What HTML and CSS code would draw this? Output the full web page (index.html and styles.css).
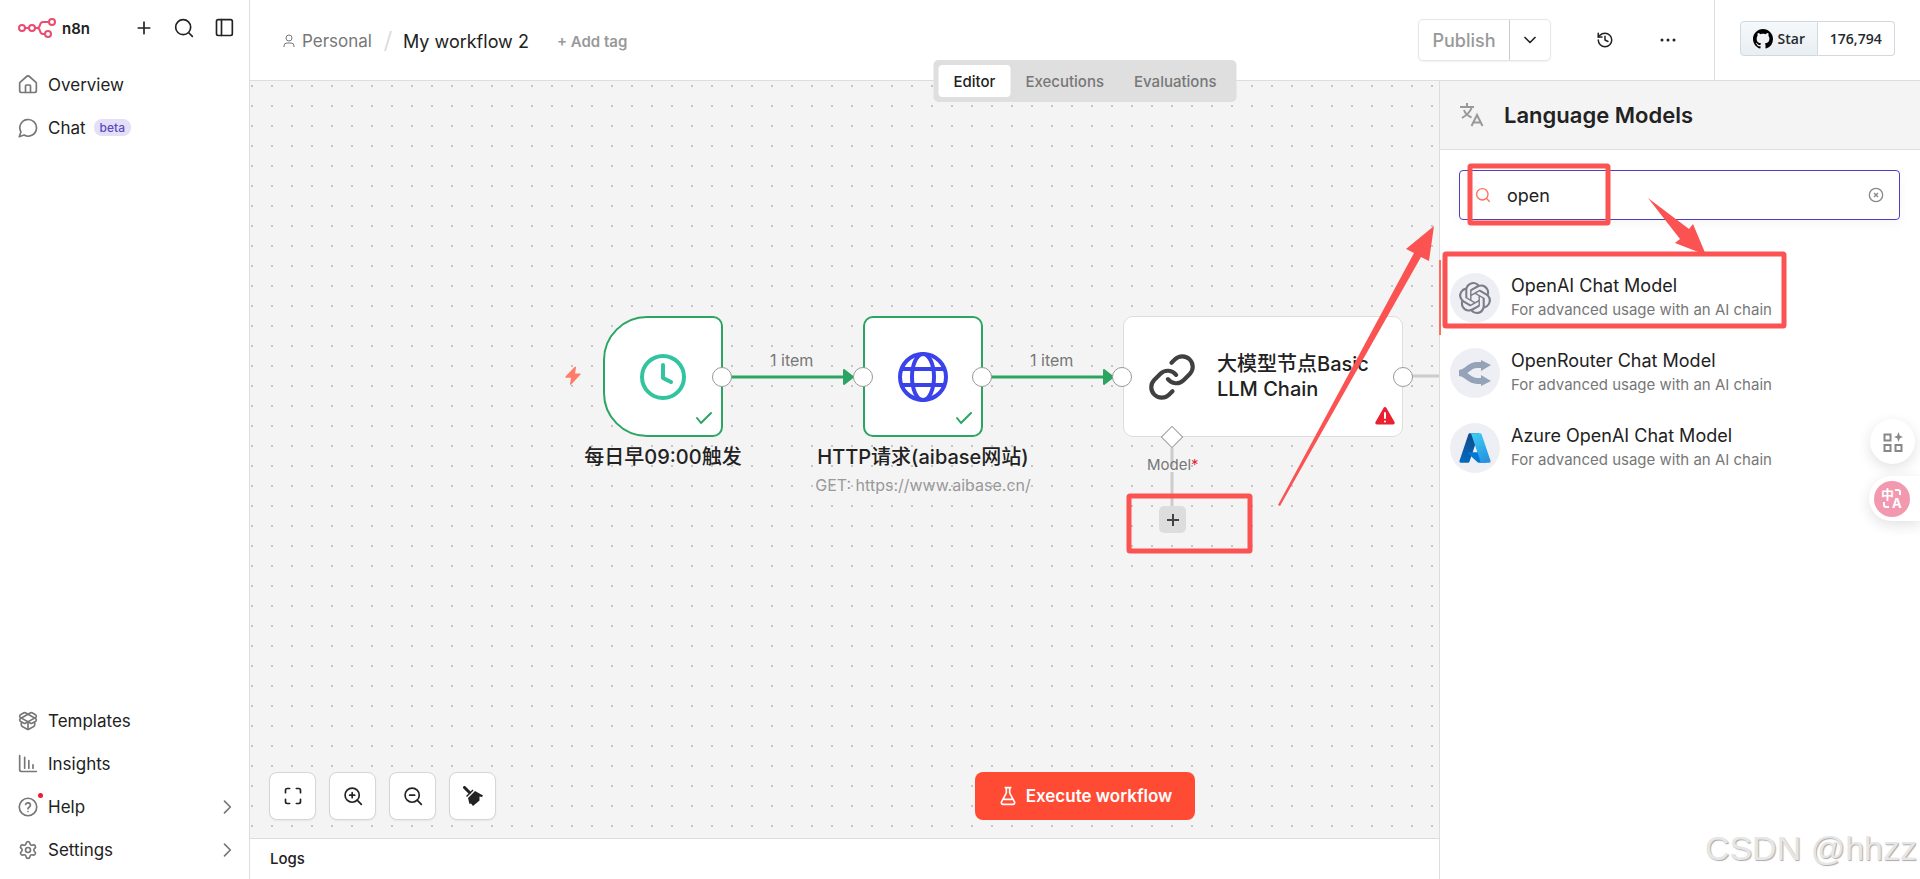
FILE: index.html
```html
<!DOCTYPE html>
<html lang="en">
<head>
    <meta charset="UTF-8">
    <meta name="viewport" content="width=device-width, initial-scale=1.0">
    <title>My workflow 2 - n8n</title>
    <link rel="stylesheet" href="styles.css">
</head>
<body>
    <aside class="sidebar">
        <div class="sidebar-top">
            <a href="#" class="logo">
                <svg width="38" height="20" viewBox="0 0 38 20" fill="none" stroke="#ea4b71" stroke-width="2">
                    <circle cx="4" cy="10" r="3"/><circle cx="14" cy="10" r="3"/>
                    <circle cx="34" cy="4" r="3"/><circle cx="30" cy="16" r="3"/>
                    <path d="M7 10h4M17 10h2c2 0 2.500-1 3-3s1.500-3 3-3h6M19 10c2 0 2.500 1 3 3s1.500 3 3 3h2"/>
                </svg>
                <span>n8n</span>
            </a>
            <button class="icon-btn" aria-label="Create"><svg width="20" height="20" viewBox="0 0 24 24"><path d="M5 12h14M12 5v14"/></svg></button>
            <button class="icon-btn" aria-label="Search"><svg width="20" height="20" viewBox="0 0 24 24"><circle cx="11" cy="11" r="9"/><path d="m22 22-4-4"/></svg></button>
            <button class="icon-btn" aria-label="Toggle sidebar"><svg width="20" height="20" viewBox="0 0 24 24"><rect x="3" y="2" width="19" height="19" rx="2"/><path d="M9 2v19"/></svg></button>
        </div>
        <nav class="menu">
            <a href="#">
                <svg width="20" height="20" viewBox="0 0 24 24"><path d="M15 21v-8a1 1 0 0 0-1-1h-4a1 1 0 0 0-1 1v8"/><path d="M2 10a2 2 0 0 1 .7-1.500l8-7a2 2 0 0 1 2.600 0l8 7A2 2 0 0 1 22 10v9a2 2 0 0 1-2 2H4a2 2 0 0 1-2-2z"/></svg>
                Overview
            </a>
            <a href="#">
                <svg width="20" height="20" viewBox="0 0 24 24"><path d="M7.300 20.500A10 10 0 1 0 3.500 16.700L1.500 22.500Z"/></svg>
                Chat <span class="beta">beta</span>
            </a>
        </nav>
        <nav class="menu menu-bottom">
            <a href="#">
                <svg width="20" height="20" viewBox="0 0 24 24"><path d="M12 22v-9"/><path d="M15.170 2.210a1.670 1.670 0 0 1 1.630 0L21 4.570a1.930 1.930 0 0 1 0 3.360L8.820 14.790a1.655 1.655 0 0 1-1.640 0L3 12.430a1.930 1.930 0 0 1 0-3.360z"/><path d="M20 13v3.870a2.060 2.060 0 0 1-1.110 1.830l-6 3.080a1.930 1.930 0 0 1-1.780 0l-6-3.080A2.060 2.060 0 0 1 4 16.870V13"/><path d="M21 12.430a1.930 1.930 0 0 0 0-3.360L8.830 2.200a1.640 1.640 0 0 0-1.630 0L3 4.570a1.930 1.930 0 0 0 0 3.360l12.180 6.860a1.636 1.636 0 0 0 1.630 0z"/></svg>
                Templates
            </a>
            <a href="#">
                <svg width="20" height="20" viewBox="0 0 24 24"><path d="M2 2v17a2 2 0 0 0 2 2h18M8 4v13M13 8v9M18 13v4"/></svg>
                Insights
            </a>
            <a href="#">
                <span class="help-icon"><svg width="20" height="20" viewBox="0 0 24 24"><circle cx="12" cy="12" r="10.500"/><path d="M9.100 9a3 3 0 0 1 5.800 1c0 2-2.900 2.500-2.900 4M12 17.500h.01"/></svg></span>
                Help
                <svg class="chevron" width="20" height="20" viewBox="0 0 24 24"><path d="m9 19 7-7-7-7"/></svg>
            </a>
            <a href="#">
                <svg width="20" height="20" viewBox="0 0 24 24"><path d="M9.670 4.136a2.340 2.340 0 0 1 4.659 0 2.340 2.340 0 0 0 3.319 1.915 2.340 2.340 0 0 1 2.330 4.033 2.340 2.340 0 0 0 0 3.831 2.340 2.340 0 0 1-2.330 4.033 2.340 2.340 0 0 0-3.319 1.915 2.340 2.340 0 0 1-4.659 0 2.340 2.340 0 0 0-3.320-1.915 2.340 2.340 0 0 1-2.330-4.033 2.340 2.340 0 0 0 0-3.831A2.340 2.340 0 0 1 6.350 6.051a2.340 2.340 0 0 0 3.319-1.915"/><circle cx="12" cy="12" r="3"/></svg>
                Settings
                <svg class="chevron" width="20" height="20" viewBox="0 0 24 24"><path d="m9 19 7-7-7-7"/></svg>
            </a>
        </nav>
    </aside>

    <div class="workspace">
        <header class="header">
            <div class="breadcrumb">
                <a href="#" class="project">
                    <svg width="14" height="14" viewBox="0 0 14 14"><circle cx="7" cy="4" r="3"/><path d="M2 13v-1a3 3 0 0 1 3-3h4a3 3 0 0 1 3 3v1"/></svg>
                    Personal
                </a>
                <svg class="slash" width="8" height="22" viewBox="0 0 8 22"><path d="M7 1 1 21"/></svg>
                <h1>My workflow 2</h1>
                <button class="add-tag">+ Add tag</button>
            </div>
            <div class="actions">
                <div class="publish">
                    <button disabled>Publish</button>
                    <button aria-label="Publish options"><svg width="20" height="20" viewBox="0 0 24 24"><path d="m6 9 6 6 6-6"/></svg></button>
                </div>
                <button class="icon-btn" aria-label="History"><svg width="18" height="18" viewBox="0 0 24 24"><path d="M3 12a9 9 0 1 0 9-9 9.750 9.750 0 0 0-6.740 2.740L3 8"/><path d="M3 3v5h5M12 7v5l4 2"/></svg></button>
                <button class="icon-btn" aria-label="More"><svg width="18" height="18" viewBox="0 0 24 24"><path class="dots" d="M4 12h.01M12 12h.01M20 12h.01"/></svg></button>
            </div>
            <div class="github">
                <a href="#" class="star">
                    <svg width="20" height="20" viewBox="0 0 16 16"><path d="M8 0C3.580 0 0 3.580 0 8c0 3.540 2.290 6.530 5.470 7.590.4.070.55-.17.55-.38 0-.19-.01-.82-.01-1.490-2.010.37-2.530-.49-2.690-.94-.09-.23-.48-.94-.82-1.130-.28-.15-.68-.52-.01-.53.63-.01 1.080.58 1.230.82.720 1.210 1.870.87 2.330.66.07-.52.28-.87.51-1.070-1.780-.2-3.640-.89-3.640-3.950 0-.87.31-1.590.82-2.150-.08-.2-.36-1.020.08-2.120 0 0 .67-.21 2.200.82.64-.18 1.320-.27 2-.27s1.360.09 2 .27c1.530-1.040 2.200-.82 2.200-.82.44 1.100.16 1.920.08 2.120.51.56.82 1.270.82 2.150 0 3.070-1.870 3.750-3.650 3.950.29.25.54.73.54 1.480 0 1.070-.01 1.930-.01 2.200 0 .21.15.46.55.38A8.010 8.010 0 0 0 16 8c0-4.420-3.580-8-8-8z"/></svg>
                    Star
                </a>
                <a href="#" class="count">176,794</a>
            </div>
            <div class="tabs">
                <button class="active">Editor</button>
                <button>Executions</button>
                <button>Evaluations</button>
            </div>
        </header>

        <main class="main">
            <section class="canvas">
                <svg class="edges" width="1300" height="600" viewBox="0 0 1300 600">
                    <g class="edge">
                        <path d="M473 296h125M733 296h125"/>
                        <path class="head" d="M594 289l9 7-9 7zM854 289l9 7-9 7z"/>
                    </g>
                    <path class="edge-idle" d="M1152 295h100M922 367v19M922 391v34"/>
                </svg>
                <span class="edge-label label-one">1 item</span>
                <span class="edge-label label-two">1 item</span>
                <svg class="bolt" width="18" height="20" viewBox="0 0 18 20"><path d="M10.500 1 1.500 10.500a.7.700 0 0 0 .5 1.200h5L6 18c-.1.800.8 1.200 1.300.6l9.200-10a.7.700 0 0 0-.5-1.200h-5L12 1.700c.1-.9-.9-1.300-1.500-.7z"/></svg>

                <div class="node trigger">
                    <svg width="46" height="46" viewBox="0 0 46 46" fill="none" stroke="#31c49f" stroke-width="4" stroke-linecap="round" stroke-linejoin="round"><circle cx="23" cy="23" r="21"/><path d="M23 11v13l8 4"/></svg>
                    <svg class="check" width="18" height="14" viewBox="0 0 18 14"><path d="m2 7 4 5L16 2"/></svg>
                    <i class="port out"></i>
                    <div class="caption"><strong>每日早09:00触发</strong></div>
                </div>

                <div class="node http">
                    <svg width="50" height="50" viewBox="0 0 50 50" fill="none" stroke="#3a42e9" stroke-width="4"><circle cx="25" cy="25" r="23"/><ellipse cx="25" cy="25" rx="11" ry="23"/><path d="M3 17h44M3 33h44"/></svg>
                    <svg class="check" width="18" height="14" viewBox="0 0 18 14"><path d="m2 7 4 5L16 2"/></svg>
                    <i class="port in"></i>
                    <i class="port out"></i>
                    <div class="caption"><strong>HTTP请求(aibase网站)</strong><small>GET: https://www.aibase.cn/</small></div>
                </div>

                <div class="node chain">
                    <svg width="50" height="50" viewBox="0 0 24 24" fill="none" stroke="#404040" stroke-width="2" stroke-linecap="round" stroke-linejoin="round"><path d="M10 13a5 5 0 0 0 7.540.54l3-3a5 5 0 0 0-7.070-7.070l-1.720 1.710"/><path d="M14 11a5 5 0 0 0-7.540-.54l-3 3a5 5 0 0 0 7.070 7.070l1.710-1.710"/></svg>
                    <strong>大模型节点Basic LLM Chain</strong>
                    <svg class="warning" width="20" height="18" viewBox="0 0 20 18"><path fill="#ea1f30" d="M8.500 1a1.700 1.700 0 0 1 3 0l8 14a1.700 1.700 0 0 1-1.500 2.500H2A1.700 1.700 0 0 1 .5 15z"/><path stroke="#fff" stroke-width="2" stroke-linecap="round" d="M10 6v5M10 14.500h.01"/></svg>
                    <i class="port in"></i>
                    <i class="port out"></i>
                    <i class="diamond"></i>
                </div>
                <span class="model-label">Model<b>*</b></span>
                <button class="plus" aria-label="Add model"><svg width="14" height="14" viewBox="0 0 14 14"><path d="M7 1v12M1 7h12"/></svg></button>

                <div class="controls">
                    <button aria-label="Zoom to fit"><svg width="20" height="20" viewBox="0 0 24 24"><path d="M3 8V5a2 2 0 0 1 2-2h3M16 3h3a2 2 0 0 1 2 2v3M21 16v3a2 2 0 0 1-2 2h-3M8 21H5a2 2 0 0 1-2-2v-3"/></svg></button>
                    <button aria-label="Zoom in"><svg width="20" height="20" viewBox="0 0 24 24"><circle cx="11" cy="11" r="8.500"/><path d="m22 22-5-5M11 8v6M8 11h6"/></svg></button>
                    <button aria-label="Zoom out"><svg width="20" height="20" viewBox="0 0 24 24"><circle cx="11" cy="11" r="8.500"/><path d="m22 22-5-5M8 11h6"/></svg></button>
                    <button aria-label="Tidy up"><svg class="broom" width="20" height="20" viewBox="0 0 20 20"><path class="handle" d="m1.500 1.500 5 5"/><path d="m3 10 6.500-6.500 1 1L4 11zM5 12l7-7 8 4.500-1 1.500-2.500-.5 0 4L10 20l-2-2.500-1.500.5z"/></svg></button>
                </div>
                <button class="execute">
                    <svg width="20" height="20" viewBox="0 0 24 24"><path d="M14 2v6a2 2 0 0 0 .25.96l5.510 10.080A2 2 0 0 1 18 22H6a2 2 0 0 1-1.760-2.960l5.510-10.080A2 2 0 0 0 10 8V2M7 16h10M8 2h8"/></svg>
                    Execute workflow
                </button>
            </section>
            <footer class="logs">Logs</footer>

            <aside class="panel">
                <div class="panel-header">
                    <svg width="24" height="24" viewBox="0 0 24 24"><path d="M0 4h14M7 0v4M11.500 5C10 9 7 12 2 15M4 7c1 3 4 6 7.500 7.500M11.500 23 17 12l5.500 11M13 19.500h8"/></svg>
                    <h2>Language Models</h2>
                </div>
                <label class="search">
                    <svg class="find" width="16" height="16" viewBox="0 0 24 24"><circle cx="11" cy="11" r="8.500"/><path d="m22 22-5-5"/></svg>
                    <input type="text" value="open" aria-label="Search models">
                    <button aria-label="Clear"><svg width="16" height="16" viewBox="0 0 24 24"><circle cx="12" cy="12" r="10"/><path d="m15 9-6 6M9 9l6 6"/></svg></button>
                </label>
                <ul class="models">
                    <li class="active">
                        <span class="avatar"><svg width="32" height="32" viewBox="0 0 24 24" fill="#7d7d87"><path d="M22.2819 9.8211a5.9847 5.9847 0 0 0-.5157-4.9108 6.0462 6.0462 0 0 0-6.5098-2.9A6.0651 6.0651 0 0 0 4.9807 4.1818a5.9847 5.9847 0 0 0-3.9977 2.9 6.0462 6.0462 0 0 0 .7427 7.0966 5.98 5.98 0 0 0 .511 4.9107 6.051 6.051 0 0 0 6.5146 2.9001A5.9847 5.9847 0 0 0 13.2599 24a6.0557 6.0557 0 0 0 5.7718-4.2058 5.9894 5.9894 0 0 0 3.9977-2.9001 6.0557 6.0557 0 0 0-.7475-7.0729zm-9.022 12.6081a4.4755 4.4755 0 0 1-2.8764-1.0408l.1419-.0804 4.7783-2.7582a.7948.7948 0 0 0 .3927-.6813v-6.7369l2.02 1.1686a.071.071 0 0 1 .038.052v5.5826a4.504 4.504 0 0 1-4.4945 4.4944zm-9.6607-4.1254a4.4708 4.4708 0 0 1-.5346-3.0137l.142.0852 4.783 2.7582a.7712.7712 0 0 0 .7806 0l5.8428-3.3685v2.3324a.0804.0804 0 0 1-.0332.0615L9.74 19.9502a4.4992 4.4992 0 0 1-6.1408-1.6464zM2.3408 7.8956a4.485 4.485 0 0 1 2.3655-1.9728V11.6a.7664.7664 0 0 0 .3879.6765l5.8144 3.3543-2.0201 1.1685a.0757.0757 0 0 1-.071 0l-4.8303-2.7865A4.504 4.504 0 0 1 2.3408 7.872zm16.5963 3.8558L13.1038 8.364 15.1192 7.2a.0757.0757 0 0 1 .071 0l4.8303 2.7913a4.4944 4.4944 0 0 1-.6765 8.1042v-5.6772a.79.79 0 0 0-.407-.667zm2.0107-3.0231l-.142-.0852-4.7735-2.7818a.7759.7759 0 0 0-.7854 0L9.409 9.2297V6.8974a.0662.0662 0 0 1 .0284-.0615l4.8303-2.7866a4.4992 4.4992 0 0 1 6.6802 4.66zM8.3065 12.863l-2.02-1.1638a.0804.0804 0 0 1-.038-.0567V6.0742a4.4992 4.4992 0 0 1 7.3757-3.4537l-.142.0805L8.704 5.459a.7948.7948 0 0 0-.3927.6813zm1.0976-2.3654l2.602-1.4998 2.6069 1.4998v2.9994l-2.5974 1.4997-2.6067-1.4997Z"/></svg></span>
                        <div><a href="#">OpenAI Chat Model</a><p>For advanced usage with an AI chain</p></div>
                    </li>
                    <li>
                        <span class="avatar"><svg width="32" height="28" viewBox="0 0 32 28"><path fill="none" stroke="#94a3b8" stroke-width="6" d="M0 14c8 0 9-8 18-8h6M0 14c8 0 9 8 18 8h6"/><path fill="#94a3b8" d="m22 1 10 5-10 6zM22 16l10 6-10 5z"/></svg></span>
                        <div><a href="#">OpenRouter Chat Model</a><p>For advanced usage with an AI chain</p></div>
                    </li>
                    <li>
                        <span class="avatar"><svg width="34" height="34" viewBox="0 0 96 96">
                            <defs>
                                <linearGradient id="azureDark" x1="0.6" y1="0" x2="0.3" y2="1"><stop offset="0" stop-color="#114a8b"/><stop offset="1" stop-color="#0669bc"/></linearGradient>
                                <linearGradient id="azureLight" x1="0.3" y1="0" x2="0.7" y2="1"><stop offset="0" stop-color="#3ccbf4"/><stop offset="1" stop-color="#2892df"/></linearGradient>
                            </defs>
                            <path fill="url(#azureDark)" d="M33.338 6.544h26.038l-27.030 80.087a4.152 4.152 0 0 1-3.933 2.824H8.149a4.145 4.145 0 0 1-3.928-5.470L29.404 9.368a4.152 4.152 0 0 1 3.934-2.825z"/>
                            <path fill="#0078d4" d="M71.175 60.261h-41.290a1.911 1.911 0 0 0-1.305 3.309l26.532 24.764a4.171 4.171 0 0 0 2.846 1.121h23.380z"/>
                            <path fill="url(#azureLight)" d="M66.595 9.364a4.145 4.145 0 0 0-3.928-2.820H33.648a4.146 4.146 0 0 1 3.928 2.820l25.184 74.620a4.146 4.146 0 0 1-3.928 5.472h29.020a4.146 4.146 0 0 0 3.927-5.472z"/>
                        </svg></span>
                        <div><a href="#">Azure OpenAI Chat Model</a><p>For advanced usage with an AI chain</p></div>
                    </li>
                </ul>
            </aside>
        </main>
    </div>

    <!-- browser extension buttons -->
    <div class="floating">
        <button class="apps" aria-label="Apps"><svg width="20" height="20" viewBox="0 0 20 20"><path d="M1.500 2.500h6v6h-6zM1.500 13h6v6h-6zM12.500 13h6v6h-6z"/><path class="spark" d="m15.500 0 1.300 3.700L20 5l-3.200 1.300L15.500 10l-1.300-3.700L11 5l3.200-1.300z"/></svg></button>
        <button class="translate" aria-label="Translate"><svg width="36" height="36" viewBox="0 0 36 36"><circle cx="18" cy="18" r="18"/><text x="7" y="18">中</text><text x="18" y="27">A</text><path d="M21 9h3a2 2 0 0 1 2 2v3M10 21v3a2 2 0 0 0 2 2h3"/></svg></button>
    </div>

    <!-- step markers -->
    <svg class="marks">
        <rect x="1129" y="496" width="121" height="55" rx="1"/>
        <rect x="1470" y="166" width="138" height="57" rx="1"/>
        <rect x="1445" y="254" width="339" height="72" rx="1"/>
        <path d="m1278 505 136-252-8-4 28-23-5 35-8-4-141 249zM1648 198l41 31 4-5 13 31-31-12 5-4z"/>
    </svg>
    <div class="watermark">CSDN @hhzz</div>
</body>
</html>
```
FILE: styles.css
```css
* {
    box-sizing: border-box;
}
body {
    margin: 0;
    height: 100vh;
    display: flex;
    overflow: hidden;
    font-family: Inter, "Noto Sans CJK SC", sans-serif;
    font-size: 18px;
    color: #222;
    background: #fff;
}
a {
    color: inherit;
    text-decoration: none;
}
button {
    font: inherit;
    color: inherit;
    background: none;
    border: none;
    padding: 0;
    cursor: pointer;
}
svg {
    display: block;
    flex-shrink: 0;
}

/* sidebar */
.sidebar {
    width: 250px;
    flex-shrink: 0;
    border-right: 1px solid #ddd;
    display: flex;
    flex-direction: column;
    padding: 8px 16px;
}
.sidebar-top {
    display: flex;
    align-items: center;
    gap: 20px;
    height: 40px;
    margin-right: -1px;
}
.logo {
    display: flex;
    align-items: center;
    gap: 6px;
    margin-right: auto;
    padding-left: 2px;
    font-size: 15px;
    font-weight: 600;
}
.icon-btn svg,
.menu svg,
.publish svg,
.controls svg {
    fill: none;
    stroke: currentColor;
    stroke-width: 2;
    stroke-linecap: round;
    stroke-linejoin: round;
}
.menu {
    display: flex;
    flex-direction: column;
    margin-top: 15px;
    font-size: 17px;
}
.menu a {
    display: flex;
    align-items: center;
    gap: 10px;
    height: 43px;
    padding-left: 2px;
}
.menu svg {
    color: #777;
}
.menu-bottom {
    margin-top: auto;
}
.menu .chevron {
    margin-left: auto;
    margin-right: -4px;
}
.beta {
    font-size: 12px;
    font-weight: 500;
    line-height: 17px;
    padding: 0 6px;
    margin-left: -2px;
    border-radius: 8px;
    background: #e4dff6;
    color: #584ac2;
}
.help-icon {
    position: relative;
}
.help-icon::after {
    content: "";
    position: absolute;
    right: -5px;
    top: -4px;
    width: 5px;
    height: 5px;
    border-radius: 50%;
    background: #ee1c2e;
}

/* header */
.workspace {
    flex: 1;
    display: flex;
    flex-direction: column;
    min-width: 0;
}
.header {
    position: relative;
    display: flex;
    height: 81px;
    border-bottom: 1px solid #ddd;
    z-index: 2;
}
.breadcrumb {
    display: flex;
    align-items: center;
    padding-left: 32px;
    padding-top: 2px;
    flex: 1;
}
.project {
    display: flex;
    align-items: center;
    gap: 6px;
    font-size: 17px;
    color: #777;
}
.project svg {
    fill: none;
    stroke: #777;
    stroke-width: 1;
}
.slash {
    margin: 0 11px 0 12px;
    stroke: #ddd;
    stroke-width: 2;
}
.breadcrumb h1 {
    margin: 0;
    font-size: 18px;
    font-weight: 400;
}
.add-tag {
    margin-left: 28px;
    font-size: 15px;
    font-weight: 600;
    color: #999;
}
.actions {
    display: flex;
    align-items: center;
    gap: 45px;
    padding-right: 37px;
}
.publish {
    display: flex;
    border: 1px solid #e6e6e6;
    border-radius: 5px;
    box-shadow: 0 1px 2px rgba(0, 0, 0, 0.06);
}
.publish button {
    height: 40px;
    width: 90px;
    font-weight: 500;
    color: #999;
}
.publish button + button {
    display: flex;
    align-items: center;
    justify-content: center;
    width: 41px;
    border-left: 1px solid #ccc;
    color: #222;
}
.icon-btn .dots {
    stroke-width: 4;
}
.github {
    display: flex;
    align-items: flex-start;
    width: 206px;
    padding: 21px 25px;
    border-left: 1px solid #ddd;
    font-family: "Open Sans", sans-serif;
    font-size: 14px;
    font-weight: 600;
    color: #24292f;
}
.github a {
    display: flex;
    align-items: center;
    justify-content: center;
    gap: 5px;
    width: 78px;
    height: 35px;
    border: 1px solid #d0d9e0;
    border-radius: 4px 0 0 4px;
}
.star {
    background: linear-gradient(#f6f9fb, #e9eef2);
}
.github .count {
    border-left: none;
    border-radius: 0 4px 4px 0;
}
.tabs {
    position: absolute;
    left: 50%;
    top: 60px;
    transform: translateX(-50%);
    display: flex;
    padding: 5px;
    border-radius: 5px;
    background: #dfdfdf;
}
.tabs button {
    height: 32px;
    padding: 0 15px;
    border-radius: 4px;
    font-size: 15px;
    font-weight: 500;
    color: #777;
}
.tabs .active {
    background: #fff;
    color: #222;
}

/* canvas */
.main {
    position: relative;
    flex: 1;
    display: flex;
    flex-direction: column;
    min-height: 0;
}
.canvas {
    position: relative;
    flex: 1;
    overflow: hidden;
    background: #f4f4f4 radial-gradient(circle at 2px 5px, #c4c4c4 1px, transparent 1px) 0 0 / 20px 20px;
}
.edges {
    position: absolute;
    left: 0;
    top: 0;
}
.edge path {
    stroke: #2ba561;
    stroke-width: 3;
}
.edge .head {
    fill: #2ba561;
    stroke-width: 2;
    stroke-linejoin: round;
}
.edge-idle {
    stroke: #ccc;
    stroke-width: 3;
}
.edge-label {
    position: absolute;
    top: 269px;
    font-size: 16px;
    line-height: 20px;
    color: #777;
}
.label-one {
    left: 520px;
}
.label-two {
    left: 780px;
}
.bolt {
    position: absolute;
    left: 314px;
    top: 285px;
    fill: #ff7c6a;
}
.node {
    position: absolute;
    top: 235px;
    width: 120px;
    height: 121px;
    display: flex;
    align-items: center;
    justify-content: center;
    border: 2px solid #2ba561;
    border-radius: 10px;
    background: #fff;
}
.node strong {
    font-size: 20px;
    font-weight: 500;
    line-height: 25px;
}
.trigger {
    left: 353px;
    border-radius: 44px 10px 10px 44px;
}
.http {
    left: 613px;
}
.chain {
    left: 873px;
    width: 280px;
    justify-content: flex-start;
    gap: 20px;
    padding: 0 23px;
    border: 1px solid #ddd;
}
.check {
    position: absolute;
    right: 8px;
    bottom: 10px;
    fill: none;
    stroke: #2ba561;
    stroke-width: 2;
    stroke-linecap: round;
    stroke-linejoin: round;
}
.warning {
    position: absolute;
    right: 7px;
    bottom: 11px;
}
.port {
    position: absolute;
    top: 50%;
    width: 20px;
    height: 20px;
    margin-top: -10px;
    border: 1px solid #999;
    border-radius: 50%;
    background: #fff;
}
.port.in {
    left: -12px;
}
.port.out {
    right: -11px;
}
.diamond {
    position: absolute;
    left: 40px;
    bottom: -9px;
    width: 16px;
    height: 16px;
    border: 1px solid #999;
    background: #fff;
    transform: rotate(45deg);
}
.caption {
    position: absolute;
    top: 127px;
    left: 50%;
    transform: translateX(-50%);
    text-align: center;
    white-space: nowrap;
}
.caption strong {
    display: block;
}
.caption small {
    display: block;
    margin-top: 5px;
    font-size: 16px;
    line-height: 20px;
    color: #999;
}
.model-label {
    position: absolute;
    left: 897px;
    top: 375px;
    font-size: 15px;
    line-height: 18px;
    color: #777;
}
.model-label b {
    font-weight: 400;
    color: #ea1f30;
}
.plus {
    position: absolute;
    left: 909px;
    top: 425px;
    width: 27px;
    height: 27px;
    display: flex;
    align-items: center;
    justify-content: center;
    border-radius: 5px;
    background: #ddd;
}
.plus svg {
    stroke: #444;
    stroke-width: 2;
}
.controls {
    position: absolute;
    left: 19px;
    bottom: 18px;
    display: flex;
    gap: 13px;
}
.controls button {
    width: 47px;
    height: 48px;
    display: flex;
    align-items: center;
    justify-content: center;
    border: 1px solid #d6d6d6;
    border-radius: 8px;
    background: #fff;
    box-shadow: 0 1px 2px rgba(0, 0, 0, 0.06);
}
.controls .broom {
    fill: #222;
    stroke: none;
}
.broom .handle {
    stroke: #222;
    stroke-width: 3;
}
.execute {
    position: absolute;
    left: 50%;
    bottom: 18px;
    transform: translateX(-50%);
    display: flex;
    align-items: center;
    justify-content: center;
    gap: 8px;
    width: 220px;
    height: 48px;
    border-radius: 8px;
    background: #ff4b33;
    color: #fff;
    font-size: 17px;
    font-weight: 600;
}
.execute svg {
    fill: none;
    stroke: #fff;
    stroke-width: 2;
}
.logs {
    height: 41px;
    padding: 0 20px;
    line-height: 40px;
    border-top: 1px solid #ddd;
    font-size: 15px;
    font-weight: 500;
}

/* node panel */
.panel {
    position: absolute;
    top: 0;
    right: 0;
    bottom: 0;
    width: 481px;
    border-left: 1px solid #ddd;
    background: #fff;
}
.panel-header {
    display: flex;
    align-items: center;
    gap: 20px;
    height: 69px;
    padding: 0 20px;
    border-bottom: 1px solid #ddd;
    background: #f4f4f4;
}
.panel-header svg {
    fill: none;
    stroke: #999;
    stroke-width: 2;
}
.panel-header h2 {
    margin: 0;
    font-size: 22px;
    font-weight: 600;
}
.search {
    display: flex;
    align-items: center;
    height: 50px;
    margin: 20px 20px 40px 19px;
    padding: 0 15px;
    border: 1px solid #4f3fc0;
    border-radius: 4px;
    box-shadow: 0 4px 12px rgba(0, 0, 0, 0.04);
}
.search svg {
    fill: none;
    stroke: #888;
    stroke-width: 2;
}
.search .find {
    stroke: #ff6f5c;
}
.search input {
    flex: 1;
    min-width: 0;
    margin-left: 16px;
    padding: 0;
    border: none;
    outline: none;
    font: inherit;
    color: #222;
}
.models {
    list-style: none;
    margin: 0;
    padding: 0;
}
.models li {
    display: flex;
    align-items: center;
    gap: 11px;
    height: 75px;
    margin-left: -1px;
    padding-left: 9px;
    border-left: 2px solid transparent;
}
.models .active {
    border-left-color: #ff6f5c;
}
.avatar {
    width: 50px;
    height: 50px;
    display: flex;
    align-items: center;
    justify-content: center;
    border-radius: 50%;
    background: #eeeef5;
}
.models a {
    display: block;
    font-size: 18px;
    font-weight: 400;
    line-height: 24px;
}
.models p {
    margin: 0;
    font-size: 15px;
    line-height: 24px;
    color: #777;
}

/* overlays */
.floating {
    position: absolute;
    right: 0;
    top: 419px;
    display: flex;
    flex-direction: column;
    align-items: flex-end;
    gap: 12px;
    z-index: 3;
}
.floating button {
    display: flex;
    align-items: center;
    height: 45px;
    background: #fff;
    box-shadow: 0 4px 14px rgba(0, 0, 0, 0.12);
}
.apps {
    justify-content: center;
    width: 45px;
    margin-right: 5px;
    border-radius: 50%;
}
.apps svg {
    fill: none;
    stroke: #888;
    stroke-width: 2;
}
.apps .spark {
    fill: #888;
    stroke: none;
}
.translate {
    width: 51px;
    padding-left: 5px;
    border-radius: 23px 0 0 23px;
}
.translate circle {
    fill: #f299b0;
}
.translate text {
    fill: #fff;
    font-size: 13px;
    font-weight: 700;
}
.translate path {
    fill: none;
    stroke: #fff;
    stroke-width: 2;
}
.marks {
    position: absolute;
    left: 0;
    top: 0;
    width: 100%;
    height: 100%;
    pointer-events: none;
    z-index: 4;
    fill: #fb5252;
}
.marks rect {
    fill: none;
    stroke: #fb5252;
    stroke-width: 5;
}
.watermark {
    position: absolute;
    right: 3px;
    bottom: 11px;
    font-family: "Liberation Sans", sans-serif;
    font-size: 34px;
    line-height: 40px;
    color: #e6e6e6;
    text-shadow: 1px 1px 1px #aaa;
    z-index: 5;
}
```
